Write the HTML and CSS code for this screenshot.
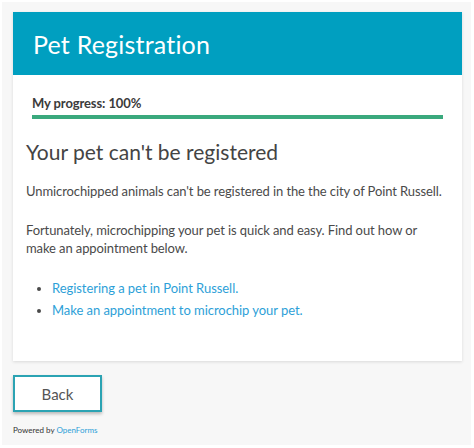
FILE: index.html
```html
<!DOCTYPE html>
<html>
<head>
<meta charset="utf-8">
<link rel="stylesheet" href="styles.css">
</head>
<body>
<div class="page">
  <div class="card">
    <div class="card-header">
      <h1 class="title">Pet Registration</h1>
    </div>
    <div class="progress">
      <div class="progress-label">My progress: 100%</div>
      <div class="progress-bar"><div class="progress-fill" style="width:100%"></div></div>
    </div>
    <div class="content">
      <h2 class="heading">Your pet can't be registered</h2>
      <p class="text">Unmicrochipped animals can't be registered in the the city of Point Russell.</p>
      <p class="text">Fortunately, microchipping your pet is quick and easy. Find out how or make an appointment below.</p>
      <ul class="links">
        <li><a href="#">Registering a pet in Point Russell.</a></li>
        <li><a href="#">Make an appointment to microchip your pet.</a></li>
      </ul>
    </div>
  </div>
  <button class="back">Back</button>
  <div class="powered">Powered by <a href="#">OpenForms</a></div>
</div>
</body>
</html>
```
FILE: styles.css
```css
html, body { margin: 0; padding: 0; background: #ffffff; }
body { font-family: Lato, "Open Sans", sans-serif; color: #4a4a4a; }
.page {
  margin: 2px 3px 3px 2px;
  height: 443px;
  box-sizing: border-box;
  background: #f7f7f7;
  padding: 10px 9px 0 11px;
}
.card {
  background: #fff;
  box-shadow: 0 1px 3px rgba(0,0,0,0.12);
  height: 349px;
}
.card-header {
  background: #009fc0;
  height: 63px;
  display: flex;
  align-items: center;
  padding: 0 20px;
}
.title {
  margin: 0;
  font-size: 25px;
  font-weight: 400;
  color: #fff;
  letter-spacing: 0.2px;
}
.progress { padding: 20px 19px 0 19px; }
.progress-label { font-size: 13px; font-weight: 700; color: #3b3b3b; line-height: 16px; letter-spacing: -0.1px; }
.progress-bar { margin-top: 4px; height: 4px; background: #e5e5e5; }
.progress-fill { height: 100%; background: #3aa97d; }
.content { padding: 20px 15px 0 13px; }
.heading { margin: 0; font-size: 21px; font-weight: 400; color: #444; line-height: 26px; }
.text { margin: 17px 0 0 0; font-size: 13px; line-height: 18px; color: #4a4a4a; letter-spacing: -0.1px; }
.text + .text { margin-top: 21px; }
.links { margin: 20px 0 0 0; padding-left: 26px; font-size: 13px; line-height: 22px; letter-spacing: -0.05px; }
.links a { color: #2d9fd8; text-decoration: none; }
.back {
  margin-top: 14px;
  width: 89px;
  height: 37px;
  background: #fff;
  border: 2px solid #2ba3b3;
  box-shadow: 0 2px 3px rgba(0,0,0,0.25);
  font-family: Lato, sans-serif;
  font-size: 15px;
  color: #555;
  display: block;
}
.powered { margin-top: 13px; font-size: 8px; color: #333; }
.powered a { color: #2d9fd8; text-decoration: none; }
```
